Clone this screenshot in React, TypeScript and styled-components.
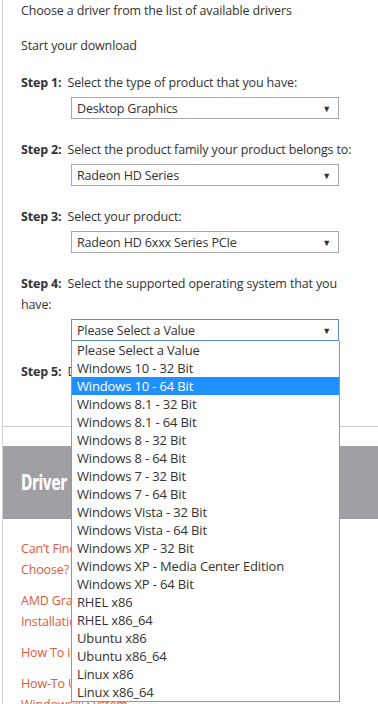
import React from "react";
import styled, { createGlobalStyle } from "styled-components";

const GlobalStyle = createGlobalStyle`
  html, body {
    margin: 0;
    padding: 0;
    background: #ffffff;
  }
  body {
    font-family: "Open Sans", "Noto Sans", "Liberation Sans", sans-serif;
    font-size: 12.5px;
    letter-spacing: -0.15px;
    color: #333333;
    overflow: hidden;
  }
`;

const steps = [
  { n: 1, label: "Select the type of product that you have:", value: "Desktop Graphics" },
  { n: 2, label: "Select the product family your product belongs to:", value: "Radeon HD Series" },
  { n: 3, label: "Select your product:", value: "Radeon HD 6xxx Series PCIe" },
];

const osOptions = [
  "Please Select a Value",
  "Windows 10 - 32 Bit",
  "Windows 10 - 64 Bit",
  "Windows 8.1 - 32 Bit",
  "Windows 8.1 - 64 Bit",
  "Windows 8 - 32 Bit",
  "Windows 8 - 64 Bit",
  "Windows 7 - 32 Bit",
  "Windows 7 - 64 Bit",
  "Windows Vista - 32 Bit",
  "Windows Vista - 64 Bit",
  "Windows XP - 32 Bit",
  "Windows XP - Media Center Edition",
  "Windows XP - 64 Bit",
  "RHEL x86",
  "RHEL x86_64",
  "Ubuntu x86",
  "Ubuntu x86_64",
  "Linux x86",
  "Linux x86_64",
];

// line breaks kept as in the page
const links = [
  "Can\u2019t Find the Right Driver? Which One Should I\nChoose?",
  "AMD Graphics Drivers and Software\nInstallation Guide",
  "How To identify Your Graphics Product",
  "How-To Uninstall AMD Software on a\nWindows\u00ae System",
];

export default function App() {
  return (
    <>
      <GlobalStyle />
      <Page>
        <Panel>
          <Intro>Choose a driver from the list of available drivers</Intro>
          <Intro>Start your download</Intro>

          {steps.map((s) => (
            <Step key={s.n}>
              <StepText>
                <b>Step {s.n}:</b>
                {s.label}
              </StepText>
              <SelectBox>
                <span>{s.value}</span>
                <Arrow>&#9660;</Arrow>
              </SelectBox>
            </Step>
          ))}

          <Step>
            <StepText>
              <b>Step 4:</b>
              Select the supported operating system that you have:
            </StepText>
            <SelectWrap>
              <SelectBox $focused>
                <span>Please Select a Value</span>
                <Arrow>&#9660;</Arrow>
              </SelectBox>
              <OptionList>
                {osOptions.map((o, i) => (
                  <Option key={o} $active={i === 2}>
                    {o}
                  </Option>
                ))}
              </OptionList>
            </SelectWrap>
          </Step>

          <Step>
            <StepText>
              <b>Step 5:</b>
              Download the driver
            </StepText>
          </Step>
        </Panel>

        <Band>
          <BandTitle>Driver Information</BandTitle>
        </Band>

        <LinkList>
          {links.map((l) => (
            <LinkItem key={l} href="#">
              {l}
            </LinkItem>
          ))}
        </LinkList>
      </Page>
    </>
  );
}

const Page = styled.div`
  margin-left: 2px;
  border-left: 1px solid #d4d4d4;
  min-height: 704px;
`;

const Panel = styled.section`
  padding: 0 18px 40px 18px;
  border-bottom: 1px solid #cccccc;
  display: flex;
  flex-direction: column;
`;

const Intro = styled.p`
  margin: 0 0 14px 0;
  line-height: 21px;

  & + & {
    margin-bottom: 15px;
  }
`;

const Step = styled.div`
  margin: 1px 0 19px 0;
  display: flex;
  flex-direction: column;

  &:last-child {
    margin-bottom: 0;
  }
`;

const StepText = styled.div`
  line-height: 21px;
  margin-bottom: 4px;

  b {
    font-weight: 700;
    margin-right: 6px;
  }
`;

const SelectWrap = styled.div`
  position: relative;
`;

const SelectBox = styled.div<{ $focused?: boolean }>`
  margin-left: 50px;
  width: 268px;
  height: 22px;
  box-sizing: border-box;
  border: 1px solid ${(p) => (p.$focused ? "#5b8bd6" : "#a9a9a9")};
  background: #ffffff;
  display: flex;
  align-items: center;
  justify-content: space-between;
  padding: 0 7px 0 5px;
  color: #333333;
`;

const Arrow = styled.span`
  font-size: 9px;
  color: #333333;
`;

const OptionList = styled.ul`
  position: absolute;
  top: 22px;
  left: 50px;
  width: 269px;
  box-sizing: border-box;
  margin: 0;
  padding: 0;
  list-style: none;
  background: #ffffff;
  border: 1px solid #7f9db9;
  border-top: none;
  z-index: 10;
`;

const Option = styled.li<{ $active?: boolean }>`
  height: 18px;
  line-height: 18px;
  padding-left: 5px;
  white-space: nowrap;
  font-size: 13px;
  color: ${(p) => (p.$active ? "#ffffff" : "#333333")};
  background: ${(p) => (p.$active ? "#1e90ff" : "transparent")};
`;

const Band = styled.div`
  margin-top: 19px;
  height: 73px;
  background: #a0a0a4;
  display: flex;
  align-items: center;
  padding-left: 18px;
`;

const BandTitle = styled.h2`
  margin: 0;
  display: inline-block;
  white-space: nowrap;
  font-family: "DejaVu Sans", sans-serif;
  font-weight: 700;
  font-size: 22px;
  color: #ffffff;
  letter-spacing: -0.5px;
  transform: scaleX(0.62);
  transform-origin: left center;
`;

const LinkList = styled.div`
  padding: 19px 18px 0 18px;
  display: flex;
  flex-direction: column;
  gap: 10px;
`;

const LinkItem = styled.a`
  color: #e05a3a;
  text-decoration: none;
  line-height: 21px;
  white-space: pre-line;
`;
